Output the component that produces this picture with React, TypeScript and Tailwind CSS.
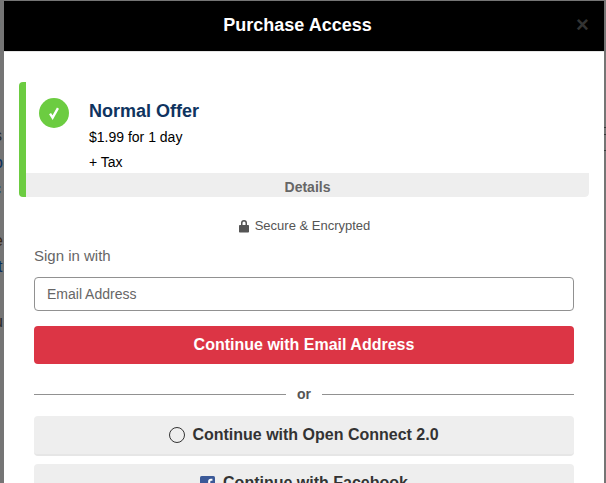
import React from 'react';

const sans = { fontFamily: '"Liberation Sans", Arial, sans-serif' };

const App: React.FC = () => {
  return (
    <div className="flex h-[483px] w-[606px] overflow-hidden bg-[#757575]" style={sans}>
      {/* bits of the dimmed page behind the modal */}
      <div className="w-[4px] shrink-0 overflow-hidden pt-[9px] text-[16px] leading-[20px] text-[#2a2a2a]">
        <span className="-ml-[21px] block text-[28px] font-bold leading-[32px]">O</span>
        <span className="-ml-[6px] mt-[85px] block">s</span>
        <span className="-ml-[6px] mt-[7px] block text-[#0a2f5c]">o</span>
        <span className="-ml-[7px] mt-[6px] block text-[#0a2f5c]">c</span>
        <span className="-ml-[6px] mt-[32px] block text-[#3a2a1a]">e</span>
        <span className="-ml-[2px] mt-[6px] block text-[#0a2f5c]">t</span>
        <span className="-ml-[6px] mt-[35px] block">u</span>
      </div>

      <div className="mt-px h-[500px] w-[600px] shrink-0 bg-white">
        <header className="flex h-[50px] items-center bg-black pb-[2px] pl-[15px] pr-[16px]">
          <h1 className="flex-1 text-center text-[18px] font-bold text-white">Purchase Access</h1>
          <span className="w-[12px] text-[22px] font-bold leading-[22px] text-[#333]">×</span>
        </header>
        <div className="border-t border-[#e5e5e5]" />

        <div className="px-[15px] pt-[30px]">
          <section className="h-[115px] overflow-hidden rounded-[4px] border-l-[7px] border-[#6ccc41]">
            <div className="flex h-[91px] pl-[13px] pt-[16px]">
              <div className="flex h-[30px] w-[30px] shrink-0 items-center justify-center rounded-full bg-[#6ccc41]">
                <svg viewBox="0 0 12 12" className="h-[14px] w-[14px]" fill="none" stroke="#fff" strokeWidth="2">
                  <path d="M2.6 6.6 4.8 10 9.4 1.800" />
                </svg>
              </div>
              <div className="ml-[20px]">
                <h2 className="pt-px text-[18px] font-bold leading-[24px] text-[#0f3460]">Normal Offer</h2>
                <p className="mt-[4px] text-[14px] leading-[20px] text-black">$1.99 for 1 day</p>
                <p className="mt-[5px] text-[14px] leading-[20px] text-black">+ Tax</p>
              </div>
            </div>
            <div className="flex h-[24px] items-center justify-center rounded-br-[4px] bg-[#eeeeee] pt-[4px] text-[14px] font-bold text-[#666]">Details</div>
          </section>

          <div className="mt-[20px] flex items-center justify-center gap-[5px] text-[13px] leading-[18px] text-[#555]">
            <svg viewBox="0 0 12 14" className="h-[14px] w-[12px]" fill="#555">
              <path d="M3 6V4a3 3 0 0 1 6 0v2h1.200c.5 0 .8.4.8.8v5.900c0 .5-.4.8-.8.8H1.800c-.5 0-.8-.4-.8-.8V6.800c0-.5.4-.8.8-.8H3Zm1.500 0h3V4a1.500 1.500 0 0 0-3 0v2Z" />
            </svg>
            <span>Secure &amp; Encrypted</span>
          </div>

          <div className="px-[15px]">
            <p className="mt-[11px] text-[15px] leading-[20px] text-[#666]">Sign in with</p>
            <div className="mt-[11px] flex h-[34px] items-center rounded-[4px] border border-[#919191] px-[12px] text-[14px] text-[#666]">Email Address</div>
            <button className="mt-[15px] flex h-[38px] w-full items-center justify-center rounded-[4px] bg-[#dc3545] text-[16px] font-bold text-white">Continue with Email Address</button>

            <div className="mt-[21px] flex items-center gap-[11px]">
              <div className="h-px flex-1 bg-[#919191]" />
              <span className="text-[14px] font-bold leading-[18px] text-[#555]">or</span>
              <div className="h-px flex-1 bg-[#919191]" />
            </div>

            <button className="mt-[13px] flex h-[40px] w-full items-center justify-center gap-[7px] rounded-[4px] border-b-2 border-[#e6e6e6] bg-[#eeeeee] text-[16px] font-bold text-[#333]">
              <span className="h-[16px] w-[16px] rounded-full border-[1.5px] border-[#333]" />
              Continue with Open Connect 2.0
            </button>
            <button className="mt-[8px] flex h-[40px] w-full items-center justify-center gap-[8px] rounded-[4px] border-b-2 border-[#e6e6e6] bg-[#eeeeee] text-[16px] font-bold text-[#333]">
              <svg viewBox="0 0 14 14" className="h-[15px] w-[15px]">
                <rect width="14" height="14" rx="1.500" fill="#3b5998" />
                <path d="M9.600 14V8.700h1.700l.3-2H9.600V5.400c0-.6.2-1 1-1h1V2.600c-.2 0-.8-.1-1.500-.1-1.500 0-2.500.9-2.500 2.600v1.600H5.900v2h1.700V14h2Z" fill="#fff" />
              </svg>
              Continue with Facebook
            </button>
          </div>
        </div>
      </div>

      <div className="w-[2px] shrink-0 pt-[127px]">
        <div className="h-[8px] border-y border-[#3a3a3a]" />
        <div className="mt-[15px] h-px bg-[#3a3a3a]" />
      </div>
    </div>
  );
};

export default App;
